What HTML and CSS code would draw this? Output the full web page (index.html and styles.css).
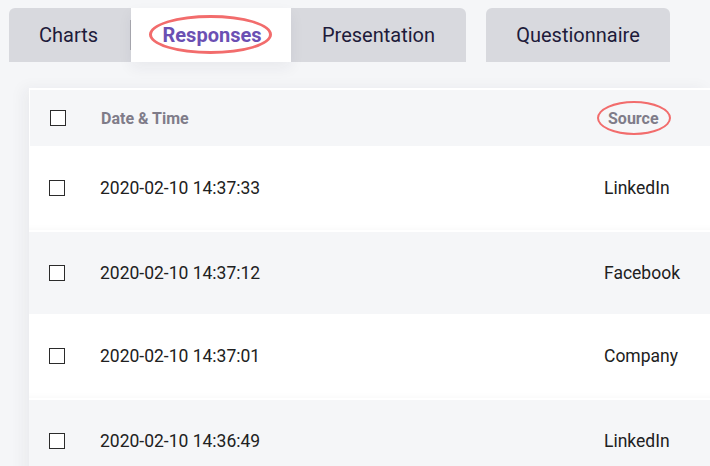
FILE: index.html
```html
<!DOCTYPE html>
<html>
<head>
<meta charset="utf-8">
<link rel="stylesheet" href="styles.css">
</head>
<body>
<div class="page">
  <nav class="tabs">
    <div class="tab-group">
      <div class="tab tab-first">Charts</div>
      <div class="tab tab-active"><span>Responses</span><i class="mark mark-tab"></i></div>
      <div class="tab tab-last">Presentation</div>
    </div>
    <div class="tab tab-single">Questionnaire</div>
  </nav>

  <section class="card">
    <div class="row head">
      <div class="cell cb"><span class="box"></span></div>
      <div class="cell">Date &amp; Time</div>
      <div class="cell src">Source</div>
      <i class="mark mark-src"></i>
    </div>
    <div class="row light">
      <div class="cell cb"><span class="box"></span></div>
      <div class="cell">2020-02-10 14:37:33</div>
      <div class="cell">LinkedIn</div>
    </div>
    <div class="row grey">
      <div class="cell cb"><span class="box"></span></div>
      <div class="cell">2020-02-10 14:37:12</div>
      <div class="cell">Facebook</div>
    </div>
    <div class="row light">
      <div class="cell cb"><span class="box"></span></div>
      <div class="cell">2020-02-10 14:37:01</div>
      <div class="cell">Company</div>
    </div>
    <div class="row grey">
      <div class="cell cb"><span class="box"></span></div>
      <div class="cell">2020-02-10 14:36:49</div>
      <div class="cell">LinkedIn</div>
    </div>
  </section>
</div>
</body>
</html>
```

FILE: styles.css
```css
html, body {
  margin: 0;
  padding: 0;
  background: #f5f6f8;
  overflow: hidden;
  font-family: Roboto, "Liberation Sans", Arial, sans-serif;
}

.page {
  padding: 8px 0 0 9px;
}

.tabs {
  display: flex;
  gap: 20px;
  height: 54px;
}

.tab-group {
  display: flex;
}

.tab {
  display: flex;
  align-items: center;
  justify-content: center;
  height: 54px;
  background: #d8d9de;
  color: #1e1b3a;
  font-size: 20px;
  box-sizing: border-box;
  position: relative;
  white-space: nowrap;
}

.tab-first {
  width: 122px;
  border-top-left-radius: 6px;
  padding-right: 3px;
}

.tab-first::after {
  content: "";
  position: absolute;
  right: 0;
  top: 12px;
  height: 30px;
  width: 1px;
  background: #a9a9b0;
}

.tab-active {
  width: 160px;
  background: #fff;
  color: #6b50b3;
  font-weight: 700;
  box-shadow: 0 6px 14px rgba(40, 40, 60, 0.06);
  z-index: 1;
  padding-left: 2px;
}

.tab-last {
  width: 175px;
  border-top-right-radius: 6px;
}

.tab-single {
  width: 184px;
  border-top-left-radius: 6px;
  border-top-right-radius: 6px;
}

.mark {
  position: absolute;
  border: 3px solid #f26c6c;
  border-radius: 50%;
  box-sizing: border-box;
}

.mark-tab {
  left: 18px;
  top: 7px;
  width: 123px;
  height: 39px;
}

.card {
  margin: 26px 0 0 20px;
  background: #fff;
  border-top: 2px solid #fff;
  box-shadow: -6px 0 14px rgba(30, 30, 50, 0.05);
}

.row {
  display: grid;
  grid-template-columns: 71px 504px 1fr;
  align-items: center;
  height: 84px;
  position: relative;
  color: #212121;
  font-size: 17.5px;
  box-sizing: border-box;
  white-space: nowrap;
}

.row.head {
  height: 56px;
  background: #f5f6f8;
  border-left: 1px solid #fff;
  color: #7f7c89;
  font-size: 16px;
  font-weight: 700;
}

.row.light {
  background: #fff;
  box-shadow: inset 0 -7px 7px -7px rgba(0, 0, 0, 0.04);
}

.row.grey {
  background: #f5f6f8;
  border-top: 2px solid #fff;
}

.cell.cb {
  padding-left: 20px;
  display: flex;
  align-items: center;
}

.box {
  width: 16px;
  height: 16px;
  box-sizing: border-box;
  border: 1.5px solid #2b2b2b;
  background: #fff;
  display: block;
}

.src {
  padding-left: 3px;
}

.mark-src {
  left: 567px;
  top: 11px;
  width: 74px;
  height: 34px;
  border-width: 2.5px;
}
```
